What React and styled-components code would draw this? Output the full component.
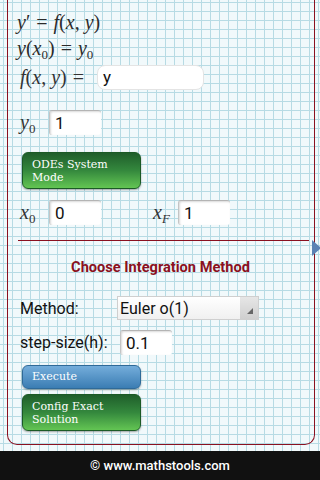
import styled, { createGlobalStyle } from "styled-components";

const Global = createGlobalStyle`
  html, body {
    margin: 0;
    padding: 0;
    width: 320px;
    height: 480px;
    overflow: hidden;
  }
`;

const Page = styled.div`
  width: 320px;
  height: 480px;
  display: flex;
  flex-direction: column;
  background-color: #f1f9fb;
  background-image:
    linear-gradient(to right, #b7dbe4 1px, transparent 1px),
    linear-gradient(to bottom, #b7dbe4 1px, transparent 1px);
  background-size: 9px 9px;
  background-position: 3px 2px;
`;

const Panel = styled.div`
  position: relative;
  height: 445px;
  margin: 0 5px 0 7px;
  box-sizing: border-box;
  border: 1px solid #8a1020;
  border-top: none;
  border-radius: 0 0 10px 10px;
  padding: 10px 0 0 9px;
`;

const MathLine = styled.div`
  font-family: "Liberation Serif", serif;
  font-style: italic;
  font-size: 20px;
  line-height: 24px;
  color: #2b2b2b;
  height: 24px;
  margin-top: ${(p) => p.mt || 0}px;
  white-space: nowrap;
`;

const Up = styled.span`
  font-style: normal;
`;

const Op = styled.span`
  font-style: normal;
  margin: 0 ${(p) => p.gap || 6}px;
`;

const Sub = styled.sub`
  font-size: 13px;
  font-style: ${(p) => (p.it ? "italic" : "normal")};
  vertical-align: -4px;
  line-height: 0;
`;

const Row = styled.div`
  display: flex;
  align-items: center;
  height: ${(p) => p.h || 26}px;
  margin-top: ${(p) => p.mt || 0}px;
`;

const MathLabel = styled.span`
  font-family: "Liberation Serif", serif;
  font-style: italic;
  font-size: 20px;
  color: #333;
  white-space: nowrap;
  width: ${(p) => (p.w ? p.w + "px" : "auto")};
  padding-left: ${(p) => p.pl || 3}px;
  margin-left: ${(p) => p.ml || 0}px;
  box-sizing: border-box;
`;

const Field = styled.div`
  box-sizing: border-box;
  width: ${(p) => p.w}px;
  height: ${(p) => p.h || 25}px;
  background: #fff;
  border-radius: ${(p) => p.r || 3}px;
  border-top: 1px solid #b4b4b4;
  border-left: 1px solid #c4c4c4;
  box-shadow: inset 1px 1px 2px rgba(0, 0, 0, 0.15);
  font-family: Roboto, "Liberation Sans", sans-serif;
  font-size: 17px;
  color: #111;
  display: flex;
  align-items: center;
  padding-left: 5px;
`;

const WideField = styled(Field)`
  border: 1px solid #e4e4e4;
  box-shadow: none;
`;

const Button = styled.div`
  box-sizing: border-box;
  width: 119px;
  height: ${(p) => p.h}px;
  margin-top: ${(p) => p.mt}px;
  margin-left: 5px;
  border-radius: 6px;
  border: 1px solid ${(p) => (p.blue ? "#2f6a98" : "#1c5a26")};
  background: ${(p) =>
    p.blue
      ? "linear-gradient(to bottom, #74addb, #3b7db3)"
      : "linear-gradient(to bottom, #1f5e2b 0%, #34883d 50%, #63c553 100%)"};
  box-shadow: 0 1px 2px rgba(0, 0, 0, 0.35);
  color: #fff;
  font-family: "DejaVu Serif", serif;
  font-size: 11px;
  line-height: 13px;
  padding: ${(p) => (p.blue ? "4px 0 0 9px" : "5px 0 0 9px")};
`;

const Rule = styled.div`
  height: 1px;
  background: #8a1020;
  margin: 15px 5px 0 1px;
`;

const Arrow = styled.div`
  position: absolute;
  right: -7px;
  top: 240px;
  width: 0;
  height: 0;
  border-top: 8px solid transparent;
  border-bottom: 8px solid transparent;
  border-left: 9px solid #5b82b4;
`;

const Title = styled.div`
  text-align: center;
  font-family: Roboto, "Liberation Sans", sans-serif;
  font-weight: bold;
  font-size: 14.6px;
  line-height: 17px;
  color: #8a1020;
  margin-top: 18px;
  padding-right: 10px;
`;

const Label = styled.span`
  font-family: Roboto, "Liberation Sans", sans-serif;
  font-size: 16px;
  color: #111;
  width: ${(p) => p.w}px;
  padding-left: 3px;
`;

const Select = styled.div`
  position: relative;
  box-sizing: border-box;
  width: 142px;
  height: 24px;
  border: 1px solid #cfcfcf;
  background: linear-gradient(to bottom, #ffffff, #f0f0f0);
  font-family: Roboto, "Liberation Sans", sans-serif;
  font-size: 16px;
  color: #111;
  display: flex;
  align-items: center;
  padding-left: 2px;
`;

const SelectBtn = styled.div`
  position: absolute;
  right: 0;
  top: 0;
  bottom: 0;
  width: 18px;
  background: linear-gradient(to bottom, #e6e6e6, #cfcfcf);
  &::after {
    content: "";
    position: absolute;
    right: 5px;
    bottom: 5px;
    border-left: 6px solid transparent;
    border-bottom: 6px solid #666;
  }
`;

const Footer = styled.div`
  margin-top: 6px;
  flex: 1;
  background: #111;
  color: #fff;
  font-family: Roboto, "Liberation Sans", sans-serif;
  font-size: 13px;
  font-weight: 500;
  display: flex;
  align-items: center;
  justify-content: center;
`;

export default function App() {
  return (
    <Page>
      <Global />
      <Panel>
        <MathLine>
          y<Up>′</Up>
          <Op>=</Op>f<Up>(</Up>x<Up>, </Up>y<Up>)</Up>
        </MathLine>
        <MathLine mt={2}>
          y<Up>(</Up>x<Sub>0</Sub>
          <Up>)</Up>
          <Op>=</Op>y<Sub>0</Sub>
        </MathLine>
        <Row h={26} mt={4}>
          <MathLabel w={80}>
            f<Up>(</Up>x<Up>, </Up>y<Up>)</Up>
            <Op>=</Op>
          </MathLabel>
          <WideField w={107} h={25} r={8}>
            y
          </WideField>
        </Row>
        <Row h={26} mt={19}>
          <MathLabel w={32}>
            y<Sub>0</Sub>
          </MathLabel>
          <Field w={52}>1</Field>
        </Row>
        <Button h={37} mt={17}>
          ODEs System
          <br />
          Mode
        </Button>
        <Row h={26} mt={10}>
          <MathLabel w={32}>
            x<Sub>0</Sub>
          </MathLabel>
          <Field w={52}>0</Field>
          <MathLabel w={28} ml={49}>
            x<Sub it>F</Sub>
          </MathLabel>
          <Field w={52}>1</Field>
        </Row>
        <Rule />
        <Arrow />
        <Title>Choose Integration Method</Title>
        <Row h={24} mt={20}>
          <Label w={97}>Method:</Label>
          <Select>
            Euler o(1)
            <SelectBtn />
          </Select>
        </Row>
        <Row h={26} mt={9}>
          <Label w={100}>step-size(h):</Label>
          <Field w={52}>0.1</Field>
        </Row>
        <Button h={24} mt={10} blue>
          Execute
        </Button>
        <Button h={37} mt={5}>
          Config Exact
          <br />
          Solution
        </Button>
      </Panel>
      <Footer>© www.mathstools.com</Footer>
    </Page>
  );
}
